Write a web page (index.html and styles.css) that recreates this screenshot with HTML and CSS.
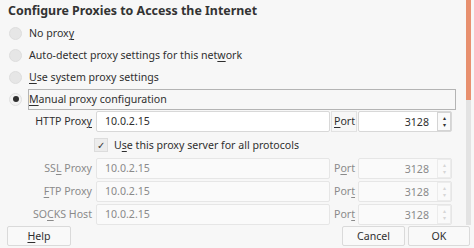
FILE: index.html
```html
<!DOCTYPE html>
<html>
<head>
<meta charset="utf-8">
<link rel="stylesheet" href="styles.css">
</head>
<body>
<div class="dialog">
  <div class="scrollwrap">
    <div class="content">
      <div class="title">Configure Proxies to Access the Internet</div>
      <div class="radio-row"><span class="radio"></span><span>No prox<u>y</u></span></div>
      <div class="radio-row"><span class="radio"></span><span>Auto-detect proxy settings for this net<u>w</u>ork</span></div>
      <div class="radio-row"><span class="radio"></span><span><u>U</u>se system proxy settings</span></div>
      <div class="radio-row"><span class="radio on"></span><span class="focus"><u>M</u>anual proxy configuration</span></div>
      <div class="grid">
        <div class="lbl">HTTP Prox<u>y</u></div>
        <div class="field">10.0.2.15</div>
        <div class="plbl focusp"><u>P</u>ort</div>
        <div class="pfield"><span class="num">3128</span><span class="spin"><span>&#9652;</span><span>&#9662;</span></span></div>

        <div class="check-row"><span class="check">&#10003;</span><span>U<u>s</u>e this proxy server for all protocols</span></div>

        <div class="lbl dis">SS<u>L</u> Proxy</div>
        <div class="field dis">10.0.2.15</div>
        <div class="plbl dis">P<u>o</u>rt</div>
        <div class="pfield dis"><span class="num">3128</span><span class="spin"><span>&#9652;</span><span>&#9662;</span></span></div>

        <div class="lbl dis"><u>F</u>TP Proxy</div>
        <div class="field dis">10.0.2.15</div>
        <div class="plbl dis">Por<u>t</u></div>
        <div class="pfield dis"><span class="num">3128</span><span class="spin"><span>&#9652;</span><span>&#9662;</span></span></div>

        <div class="lbl dis">SO<u>C</u>KS Host</div>
        <div class="field dis">10.0.2.15</div>
        <div class="plbl dis">Por<u>t</u></div>
        <div class="pfield dis"><span class="num">3128</span><span class="spin"><span>&#9652;</span><span>&#9662;</span></span></div>
      </div>
    </div>
    <div class="scrollbar"><div class="thumb"></div></div>
  </div>
  <div class="footer">
    <button class="btn help"><u>H</u>elp</button>
    <div class="right">
      <button class="btn cancel">Cancel</button>
      <button class="btn ok">OK</button>
    </div>
  </div>
</div>
</body>
</html>
```
FILE: styles.css
```css
html, body {
  margin: 0;
  padding: 0;
  background: #f7f7f7;
}
body {
  font-family: "Noto Sans", "Open Sans", sans-serif;
  font-size: 10.6px;
  color: #2f2f2f;
}
u {
  text-decoration: underline;
  text-underline-offset: 2px;
}
.dialog {
  width: 474px;
  height: 248px;
  display: flex;
  flex-direction: column;
  overflow: hidden;
}
.scrollwrap {
  display: flex;
  height: 225px;
}
.content {
  flex: 1;
  overflow: hidden;
  padding-left: 8px;
}
.scrollbar {
  width: 5px;
  margin-right: 3px;
  background: #e3e3e3;
  display: flex;
  flex-direction: column;
}
.thumb {
  height: 100px;
  background: #e8906f;
}
.title {
  font-weight: bold;
  font-size: 12.4px;
  height: 22px;
  line-height: 22px;
  color: #333;
}
.radio-row {
  height: 22px;
  display: flex;
  align-items: center;
}
.radio {
  width: 11px;
  height: 11px;
  border-radius: 50%;
  background: #e6e6e6;
  border: 1px solid #dedede;
  margin-left: 1px;
  margin-right: 7px;
  flex: none;
  display: flex;
  align-items: center;
  justify-content: center;
}
.radio.on {
  background: #f2f2f2;
  border-color: #e0e0e0;
}
.radio.on::after {
  content: "";
  width: 6px;
  height: 6px;
  border-radius: 50%;
  background: #2e2e2e;
}
.focus {
  flex: 1;
  height: 19px;
  line-height: 19px;
  border: 1px solid #b4b4b4;
  margin-left: -1px;
  margin-right: 10px;
}
.grid {
  display: grid;
  grid-template-columns: 84px 234px 20px 94px;
  column-gap: 4px;
  row-gap: 2px;
  grid-template-rows: 21px 22px 21px 21px 21px;
  margin-top: 1px;
}
.lbl {
  text-align: right;
  line-height: 21px;
  white-space: nowrap;
}
.plbl {
  line-height: 19px;
  white-space: nowrap;
  padding: 0 2px;
  margin: 0 -3px;
  border: 1px solid transparent;
}
.plbl.focusp {
  border-color: #e2e2e2;
}
.field {
  background: #fff;
  border: 1px solid #d8d8d8;
  line-height: 19px;
  padding-left: 8px;
  border-radius: 2px;
}
.pfield {
  background: #fff;
  border: 1px solid #d8d8d8;
  border-radius: 2px;
  display: flex;
  align-items: center;
}
.num {
  flex: 1;
  text-align: right;
  padding-right: 8px;
}
.spin {
  width: 12px;
  height: 17px;
  border: 1px solid #d4d4d4;
  display: flex;
  flex-direction: column;
  align-items: center;
  justify-content: center;
  font-size: 6px;
  line-height: 7px;
  color: #333;
  background: #fafafa;
}
.dis {
  color: #8a8a8a;
}
.field.dis, .pfield.dis {
  background: #fafafa;
  border-color: #e6e6e6;
}
.pfield.dis .spin {
  border-color: #ececec;
  color: #d6d6d6;
}
.check-row {
  grid-column: 2 / 5;
  display: flex;
  align-items: center;
  margin-left: -2px;
}
.check {
  width: 12px;
  height: 12px;
  border: 1px solid #dcdcdc;
  background: #ececec;
  margin-right: 6px;
  font-size: 10px;
  line-height: 12px;
  text-align: center;
  color: #333;
}
.footer {
  display: flex;
  justify-content: space-between;
  padding: 1px 4px 0 7px;
}
.right {
  display: flex;
  gap: 3px;
}
.btn {
  font-family: "Noto Sans", "Open Sans", sans-serif;
  font-size: 10.6px;
  color: #2f2f2f;
  background: #f9f9f9;
  border: 1px solid #dadada;
  border-radius: 2px;
  height: 20px;
  padding: 0;
  margin: 0;
}
.help { width: 64px; }
.cancel { width: 63px; }
.ok { width: 62px; }
```
